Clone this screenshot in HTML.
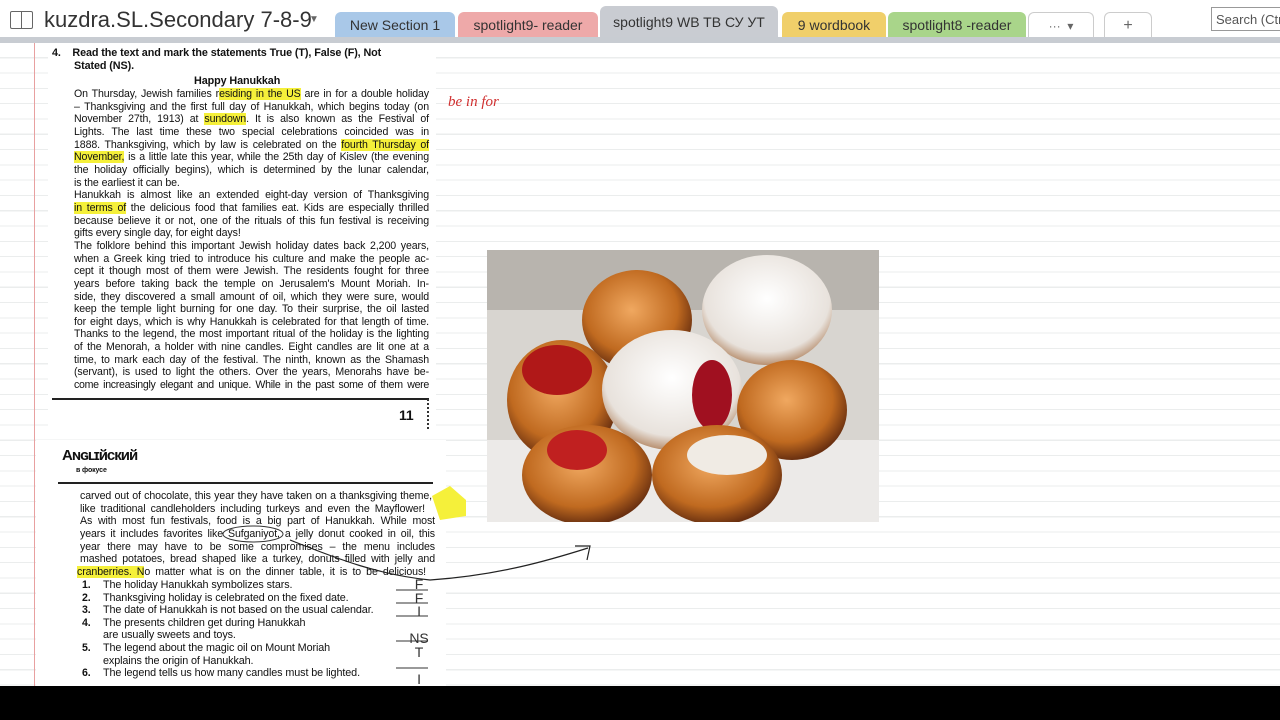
<!DOCTYPE html>
<html><head><meta charset="utf-8"><style>
*{margin:0;padding:0;box-sizing:border-box}
body{width:1280px;height:720px;overflow:hidden;position:relative;background:#fff;font-family:"Liberation Sans",sans-serif}
.top{position:absolute;left:0;top:0;width:1280px;height:38px;background:#fff}
.bar{position:absolute;left:0;top:37px;width:1280px;height:6px;background:#c8ccd2}
.tab{position:absolute;top:12px;height:26px;border-radius:6px 6px 0 0;color:#333;text-align:center;line-height:26px;font-family:"Liberation Sans",sans-serif;font-size:14px}
.page{position:absolute;left:0;top:43px;width:1280px;height:643px;background:repeating-linear-gradient(to bottom,#fff 0,#fff 14.2px,#ebeded 14.2px,#ebeded 15.3px)}
.paper{position:absolute;background:#fff}
.l{position:absolute;font-size:10.6px;line-height:12.65px;color:#111;white-space:nowrap;letter-spacing:-0.1px}
.j{text-align:justify;text-align-last:justify;white-space:normal}
.hl{background:#f5f03a}
.black{position:absolute;left:0;top:686px;width:1280px;height:34px;background:#000}
</style></head><body>
<div class="top">
 <div style="position:absolute;left:10px;top:11px;width:23px;height:18px;border:1.5px solid #666;border-radius:2px"></div>
 <div style="position:absolute;left:21px;top:11px;width:1px;height:18px;background:#666"></div>
 <div style="position:absolute;left:44px;top:7px;font-size:22px;color:#333">kuzdra.SL.Secondary 7-8-9</div>
 <div style="position:absolute;left:309px;top:14px;font-size:10px;color:#666">▼</div>
</div>
<div class="tab" style="left:335px;width:120px;background:#a9c8e8">New Section 1</div>
<div class="tab" style="left:458px;width:140px;background:#eea9a9">spotlight9- reader</div>
<div class="tab" style="left:600px;width:178px;top:6px;height:32px;line-height:32px;background:#c9ccd2">spotlight9 WB TB СУ УТ</div>
<div class="tab" style="left:782px;width:104px;background:#f0cf6a">9 wordbook</div>
<div class="tab" style="left:888px;width:138px;background:#a9d58a">spotlight8 -reader</div>
<div class="tab" style="left:1028px;width:66px;background:#fff;border:1px solid #ccc;border-bottom:none;font-size:12px;color:#666">···&nbsp;&nbsp;▾</div>
<div class="tab" style="left:1104px;width:48px;background:#fff;border:1px solid #ccc;border-bottom:none;font-size:16px;color:#666">+</div>
<div style="position:absolute;left:1211px;top:7px;width:80px;height:24px;border:1px solid #999;font-size:13px;color:#555;padding:4px 4px;white-space:nowrap;overflow:hidden">Search (Ctrl</div>
<div class="bar"></div>
<div class="page"></div>
<div style="position:absolute;left:34px;top:43px;width:1px;height:643px;background:#e8a0a0"></div>

<div class="paper" style="left:48px;top:43px;width:388px;height:386px"></div>
<div class="l" style="left:52px;top:47px;font-weight:bold;font-size:10.8px">4.&nbsp;&nbsp;&nbsp;&nbsp;Read the text and mark the statements True (T), False (F), Not</div>
<div class="l" style="left:74px;top:60px;font-weight:bold;font-size:10.8px">Stated (NS).</div>
<div class="l" style="left:194px;top:75px;font-weight:bold;font-size:10.8px">Happy Hanukkah</div>
<div style="position:absolute;left:74px;top:88px;width:355px">
<div class="l j" style="position:relative;width:355px">On Thursday, Jewish families r<span class="hl">esiding in the US</span> are in for a double holiday</div>
<div class="l j" style="position:relative;width:355px">– Thanksgiving and the first full day of Hanukkah, which begins today (on</div>
<div class="l j" style="position:relative;width:355px">November 27th, 1913) at <span class="hl">sundown</span>. It is also known as the Festival of</div>
<div class="l j" style="position:relative;width:355px">Lights. The last time these two special celebrations coincided was in</div>
<div class="l j" style="position:relative;width:355px">1888. Thanksgiving, which by law is celebrated on the <span class="hl">fourth Thursday of</span></div>
<div class="l j" style="position:relative;width:355px"><span class="hl">November,</span> is a little late this year, while the 25th day of Kislev (the evening</div>
<div class="l j" style="position:relative;width:355px">the holiday officially begins), which is determined by the lunar calendar,</div>
<div class="l" style="position:relative">is the earliest it can be.</div>
<div class="l j" style="position:relative;width:355px">Hanukkah is almost like an extended eight-day version of Thanksgiving</div>
<div class="l j" style="position:relative;width:355px"><span class="hl">in terms of</span> the delicious food that families eat. Kids are especially thrilled</div>
<div class="l j" style="position:relative;width:355px">because believe it or not, one of the rituals of this fun festival is receiving</div>
<div class="l" style="position:relative">gifts every single day, for eight days!</div>
<div class="l j" style="position:relative;width:355px">The folklore behind this important Jewish holiday dates back 2,200 years,</div>
<div class="l j" style="position:relative;width:355px">when a Greek king tried to introduce his culture and make the people ac-</div>
<div class="l j" style="position:relative;width:355px">cept it though most of them were Jewish. The residents fought for three</div>
<div class="l j" style="position:relative;width:355px">years before taking back the temple on Jerusalem's Mount Moriah. In-</div>
<div class="l j" style="position:relative;width:355px">side, they discovered a small amount of oil, which they were sure, would</div>
<div class="l j" style="position:relative;width:355px">keep the temple light burning for one day. To their surprise, the oil lasted</div>
<div class="l j" style="position:relative;width:355px">for eight days, which is why Hanukkah is celebrated for that length of time.</div>
<div class="l j" style="position:relative;width:355px">Thanks to the legend, the most important ritual of the holiday is the lighting</div>
<div class="l j" style="position:relative;width:355px">of the Menorah, a holder with nine candles. Eight candles are lit one at a</div>
<div class="l j" style="position:relative;width:355px">time, to mark each day of the festival. The ninth, known as the Shamash</div>
<div class="l j" style="position:relative;width:355px">(servant), is used to light the others. Over the years, Menorahs have be-</div>
<div class="l j" style="position:relative;width:355px;letter-spacing:-0.3px">come increasingly elegant and unique. While in the past some of them were</div>
</div>
<div style="position:absolute;left:52px;top:398px;width:377px;height:2px;background:#222"></div>
<div class="l" style="left:399px;top:409px;font-weight:bold;font-size:14px">11</div>
<div style="position:absolute;left:427px;top:399px;height:30px;border-left:2px dotted #333"></div>
<div style="position:absolute;left:448px;top:94px;color:#d03030;font-family:'Liberation Serif',serif;font-style:italic;font-size:15px">be in for</div>

<div class="paper" style="left:36px;top:440px;width:410px;height:246px"></div>
<div class="l" style="left:62px;top:450px;font-weight:900;font-size:15px;letter-spacing:-1px">Аɴɢʟɪйский</div>
<div class="l" style="left:76px;top:465px;font-size:7px;font-weight:bold">в фокусе</div>
<div style="position:absolute;left:58px;top:482px;width:375px;height:2px;background:#222"></div>
<div style="position:absolute;left:80px;top:490px;width:355px">
<div class="l j" style="position:relative;width:352px">carved out of chocolate, this year they have taken on a thanksgiving theme,</div>
<div class="l j" style="position:relative;width:345px">like traditional candleholders including turkeys and even the Mayflower!</div>
<div class="l j" style="position:relative;width:355px">As with most fun festivals, food is a big part of Hanukkah. While most</div>
<div class="l j" style="position:relative;width:355px">years it includes favorites like Sufganiyot, a jelly donut cooked in oil, this</div>
<div class="l j" style="position:relative;width:355px">year there may have to be some compromises – the menu includes</div>
<div class="l j" style="position:relative;width:355px">mashed potatoes, bread shaped like a turkey, donuts filled with jelly and</div>
<div class="l j" style="position:relative;width:349px;left:-3px"><span class="hl">cranberries. N</span>o matter what is on the dinner table, it is to be delicious!</div>
</div>
<div class="l" style="left:82px;top:579px;line-height:12.6px"><b>1.</b><br><b>2.</b><br><b>3.</b><br><b>4.</b><br><br><b>5.</b><br><br><b>6.</b></div>
<div class="l" style="left:103px;top:579px;line-height:12.6px;font-size:10.8px">The holiday Hanukkah symbolizes stars.<br>Thanksgiving holiday is celebrated on the fixed date.<br>The date of Hanukkah is not based on the usual calendar.<br>The presents children get during Hanukkah<br>are usually sweets and toys.<br>The legend about the magic oil on Mount Moriah<br>explains the origin of Hanukkah.<br>The legend tells us how many candles must be lighted.</div>
<div class="l" style="left:404px;top:578px;line-height:13.5px;font-size:14px;color:#333;text-align:center;width:30px;font-weight:normal">F<br>F<br>I<br><br>NS<br>T<br><br>I</div>
<svg style="position:absolute;left:0;top:0" width="1280" height="720">
<path d="M432 496 L450 486 L466 500 L466 516 L440 520 Z" fill="#f5f03a"/>
<path d="M290 540 C340 560 380 575 430 580 C500 575 550 560 588 548 M575 546 L590 546 L587 560" stroke="#222" fill="none" stroke-width="1.2"/>
<ellipse cx="253" cy="534" rx="30" ry="8" stroke="#333" fill="none"/>
<g stroke="#333" stroke-width="1"><line x1="396" y1="590" x2="428" y2="590"/><line x1="396" y1="603" x2="428" y2="603"/><line x1="396" y1="616" x2="428" y2="616"/><line x1="396" y1="641" x2="428" y2="641"/><line x1="396" y1="668" x2="428" y2="668"/></g>
</svg>

<svg style="position:absolute;left:487px;top:250px" width="392" height="272">
<defs>
<radialGradient id="d" cx="45%" cy="40%" r="60%"><stop offset="0" stop-color="#f0a860"/><stop offset=".7" stop-color="#c06a20"/><stop offset="1" stop-color="#6a3010"/></radialGradient>
<radialGradient id="s" cx="50%" cy="40%" r="60%"><stop offset="0" stop-color="#fff"/><stop offset=".8" stop-color="#e8e2dc"/><stop offset="1" stop-color="#b89070"/></radialGradient>
</defs>
<rect width="392" height="272" fill="#d8d5d0"/>
<rect y="190" width="392" height="82" fill="#eceae8"/>
<rect width="392" height="60" fill="#b8b4ae"/>
<ellipse cx="150" cy="70" rx="55" ry="50" fill="url(#d)"/>
<ellipse cx="280" cy="60" rx="65" ry="55" fill="url(#s)"/>
<ellipse cx="75" cy="150" rx="55" ry="60" fill="url(#d)"/>
<ellipse cx="70" cy="120" rx="35" ry="25" fill="#b01818"/>
<ellipse cx="185" cy="140" rx="70" ry="60" fill="url(#s)"/>
<ellipse cx="225" cy="145" rx="20" ry="35" fill="#a01020"/>
<ellipse cx="305" cy="160" rx="55" ry="50" fill="url(#d)"/>
<ellipse cx="100" cy="225" rx="65" ry="50" fill="url(#d)"/>
<ellipse cx="90" cy="200" rx="30" ry="20" fill="#c02020"/>
<ellipse cx="230" cy="225" rx="65" ry="50" fill="url(#d)"/>
<ellipse cx="240" cy="205" rx="40" ry="20" fill="#f0ebe4"/>
</svg>
<div class="black"></div>
</body></html>
